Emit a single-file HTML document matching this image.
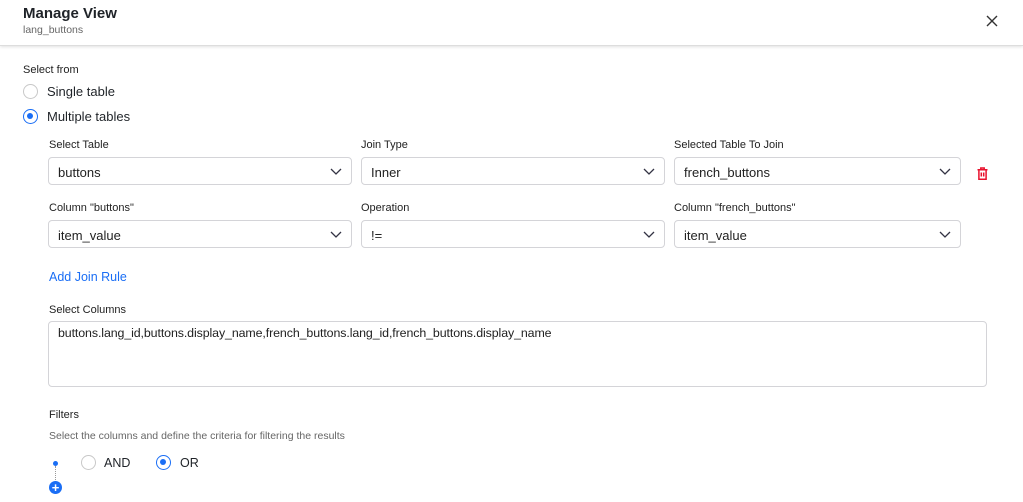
<!DOCTYPE html><html><head><style>
*{box-sizing:border-box;margin:0;padding:0}
body{width:1023px;height:502px;overflow:hidden;background:#fff;font-family:"Liberation Sans",sans-serif;color:#1f2328;position:relative}
.a{position:absolute;white-space:nowrap}
.hdr{position:absolute;left:0;top:0;width:1023px;height:46px;border-bottom:1px solid #ddd;box-shadow:0 1px 3px rgba(0,0,0,.12)}
.lbl{font-size:11px;color:#222}
.sel{position:absolute;height:28px;border:1px solid #d4d4d8;border-radius:4px;font-size:13px;padding:7px 9px;color:#222}
.sel svg{position:absolute;right:9px;top:10px}
.r{position:absolute;width:15px;height:15px;border-radius:50%;border:1px solid #c8c8c8}
.r.on{border:1.5px solid #1a6ef5}
.r.on:after{content:"";position:absolute;left:3px;top:3px;width:6px;height:6px;border-radius:50%;background:#1a6ef5}
</style></head><body>
<div class="hdr"></div>
<div class="a" style="left:23px;top:5px;font-size:15px;font-weight:bold">Manage View</div>
<div class="a" style="left:23px;top:24px;font-size:10.5px;color:#666">lang_buttons</div>
<svg class="a" style="left:986px;top:15px" width="12" height="12" viewBox="0 0 12 12"><path d="M1 1L11 11M11 1L1 11" stroke="#333" stroke-width="1.4"/></svg>
<div class="a lbl" style="left:23px;top:64px">Select from</div>
<div class="r" style="left:23px;top:84px"></div><div class="a" style="left:47px;top:84px;font-size:13px">Single table</div>
<div class="r on" style="left:23px;top:109px"></div><div class="a" style="left:47px;top:109px;font-size:13px">Multiple tables</div>

<div class="a lbl" style="left:49px;top:139px">Select Table</div>
<div class="a lbl" style="left:361px;top:139px">Join Type</div>
<div class="a lbl" style="left:674px;top:139px">Selected Table To Join</div>
<div class="sel" style="left:48px;top:157px;width:304px">buttons<svg width="12" height="8"><path d="M1 1l5 5 5-5" fill="none" stroke="#334" stroke-width="1.3"/></svg></div>
<div class="sel" style="left:361px;top:157px;width:304px">Inner<svg width="12" height="8"><path d="M1 1l5 5 5-5" fill="none" stroke="#334" stroke-width="1.3"/></svg></div>
<div class="sel" style="left:674px;top:157px;width:287px">french_buttons<svg width="12" height="8"><path d="M1 1l5 5 5-5" fill="none" stroke="#334" stroke-width="1.3"/></svg></div>
<svg class="a" style="left:977px;top:167px" width="11" height="13" viewBox="0 0 11 13"><path d="M0.5 2.7h10M3.8 2.7V1h3.4v1.7M1.9 2.7v9.5h7.2V2.7M4.3 5.5v4M6.7 5.5v4" fill="none" stroke="#e8112d" stroke-width="1.5"/></svg>

<div class="a lbl" style="left:49px;top:202px">Column "buttons"</div>
<div class="a lbl" style="left:361px;top:202px">Operation</div>
<div class="a lbl" style="left:674px;top:202px">Column "french_buttons"</div>
<div class="sel" style="left:48px;top:220px;width:304px">item_value<svg width="12" height="8"><path d="M1 1l5 5 5-5" fill="none" stroke="#334" stroke-width="1.3"/></svg></div>
<div class="sel" style="left:361px;top:220px;width:304px">!=<svg width="12" height="8"><path d="M1 1l5 5 5-5" fill="none" stroke="#334" stroke-width="1.3"/></svg></div>
<div class="sel" style="left:674px;top:220px;width:287px">item_value<svg width="12" height="8"><path d="M1 1l5 5 5-5" fill="none" stroke="#334" stroke-width="1.3"/></svg></div>

<div class="a" style="left:49px;top:270px;font-size:12.5px;color:#1a6ef5">Add Join Rule</div>
<div class="a lbl" style="left:49px;top:304px">Select Columns</div>
<div class="sel" style="left:48px;top:321px;width:939px;height:66px;padding:4px 9px;font-size:12.4px;letter-spacing:-0.1px">buttons.lang_id,buttons.display_name,french_buttons.lang_id,french_buttons.display_name</div>

<div class="a lbl" style="left:49px;top:409px">Filters</div>
<div class="a" style="left:49px;top:430px;font-size:10.5px;color:#666">Select the columns and define the criteria for filtering the results</div>
<div class="a" style="left:53px;top:461px;width:5px;height:5px;border-radius:50%;background:#1a6ef5"></div>
<div class="a" style="left:55px;top:466px;height:16px;border-left:1px dotted #999"></div>
<div class="a" style="left:49px;top:481px;width:13px;height:13px;border-radius:50%;background:#1a6ef5;color:#fff;font-size:13px;font-weight:bold;line-height:13px;text-align:center">+</div>
<div class="r" style="left:81px;top:455px"></div><div class="a" style="left:104px;top:456px;font-size:12.5px">AND</div>
<div class="r on" style="left:156px;top:455px"></div><div class="a" style="left:180px;top:456px;font-size:12.5px">OR</div>
</body></html>
